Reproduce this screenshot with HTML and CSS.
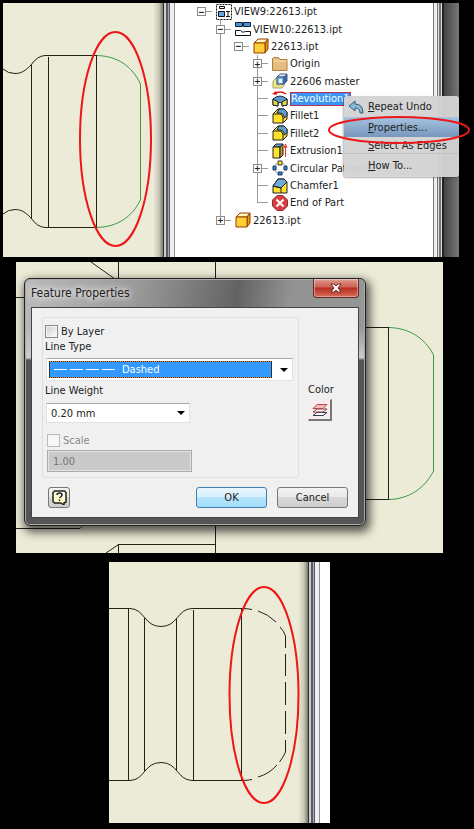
FILE: index.html
```html
<!DOCTYPE html>
<html lang="en">
<head>
    <meta charset="UTF-8">
    <meta name="viewport" content="width=device-width, initial-scale=1.0">
    <title>Feature Properties</title>
    <link rel="stylesheet" href="styles.css">
</head>
<body>
    <main class="steps">
        <!-- Step 1: browser tree and context menu -->
        <section class="panel panel-tree">
            <svg class="sheet" width="160" height="254" viewBox="3 3 160 254">
                <g class="edge">
                    <path d="M3 69Q8 73.500 15 73.500C22 73.500 26 70 31 65Q37 56 45 55.500H97M3 214Q8 209.500 15 209.500C22 209.500 26 213 31 218Q37 227 45 227.500H97"/>
                    <path d="M31.500 65V218M48.500 57V227M96.500 55V228"/>
                </g>
                <path class="edge green" d="M97 55.500C117 56 132 66 140.500 84V200C132 217 117 227 97 227.500"/>
                <ellipse class="mark" cx="115.500" cy="139" rx="35.500" ry="107"/>
            </svg>
            <div class="frame"></div>
            <ul class="tree">
                <li class="row level-0">
                    <span class="node"><button class="expander" aria-label="Collapse">−</button></span>
                    <svg class="icon" viewBox="0 0 16 16"><path d="M.5.500h15v15H.5z" fill="none" stroke="#111" stroke-dasharray="2 1"/><path d="M3.500 2.500h5v2h-5z" fill="#fff" stroke="#111"/><path d="M2.500 7.500h6v5h-6z" fill="#63a9e8" stroke="#111"/><path d="M10 7.500h4M12 7.500v5M10 12.500h4" stroke="#111" fill="none"/></svg>
                    <span>VIEW9:22613.ipt</span>
                </li>
                <li class="row level-1">
                    <span class="node"><button class="expander" aria-label="Collapse">−</button></span>
                    <svg class="icon" viewBox="0 0 16 16"><path d="M.5 1.500h7v4h-7zM8.500 1.500h7v4h-7z" fill="#4b91d4" stroke="#123"/><path d="M.5 9.500h5q2 3 5 1h5v4H.5z" fill="#fff" stroke="#111"/></svg>
                    <span>VIEW10:22613.ipt</span>
                </li>
                <li class="row level-2">
                    <span class="node"><button class="expander" aria-label="Collapse">−</button></span>
                    <svg class="icon" viewBox="0 0 16 16"><path d="M1 5l4-4h10l-3 4z" fill="#fff6c0" stroke="#983f05"/><path d="M12 5l3-4v10l-3 4z" fill="#e39b10" stroke="#983f05"/><path d="M1 5h11v10H1z" fill="#ffcf35" stroke="#983f05"/></svg>
                    <span>22613.ipt</span>
                </li>
                <li class="row level-3">
                    <span class="node"><button class="expander" aria-label="Expand">+</button></span>
                    <svg class="icon" viewBox="0 0 16 16"><path d="M.5 14.500v-12l1-1h5l1.500 2h7v11z" fill="#e5bd81" stroke="#aa7c3d"/><path d="M1.500 5h13" stroke="#f9dfb2"/></svg>
                    <span>Origin</span>
                </li>
                <li class="row level-3">
                    <span class="node"><button class="expander" aria-label="Expand">+</button></span>
                    <svg class="icon" viewBox="0 0 16 16"><path d="M1 8l4-4v8l8-1-3 4H1z" fill="#f0e77a" stroke="#a5a27a"/><path d="M5 4l3-3h7l-3 3z" fill="#d6edfc" stroke="#458"/><path d="M5 4h7v7H5z" fill="#72b5e9" stroke="#458"/><path d="M12 4l3-3v7l-3 3z" fill="#376aa0" stroke="#458"/><path d="M7 6h3v4H7z" fill="#eaf7ff"/></svg>
                    <span>22606 master</span>
                </li>
                <li class="row level-3">
                    <span class="node leaf"></span>
                    <svg class="icon" viewBox="0 0 16 16"><path d="M14 3Q8-1 2 3" fill="none" stroke="#dc1717" stroke-width="1.500"/><path d="M4 0L0 3l5 1z" fill="#dc1717"/><path d="M1 8q7-6 14 0v6l-5 1v-3q-2-1-4 0v3l-5-1z" fill="#5c98cb" stroke="#17283c"/><path d="M1 8l5 3v4l-5-1zM15 8l-5 3v4l5-1z" fill="#ecd931" stroke="#17283c"/></svg>
                    <span class="selected">Revolution1</span>
                </li>
                <li class="row level-3">
                    <span class="node leaf"></span>
                    <svg class="icon" viewBox="0 0 16 16"><path d="M1 6l5-5h6l3 3v7l-4 4H1z" fill="#ffe02c" stroke="#222"/><path d="M5 5l2-4h5l3 3v4l-3 2V8q-1-3-4-3z" fill="#5e9fd5" stroke="#222"/><path d="M1 6h7q3 1 3 4v5" fill="none" stroke="#222"/></svg>
                    <span>Fillet1</span>
                </li>
                <li class="row level-3">
                    <span class="node leaf"></span>
                    <svg class="icon" viewBox="0 0 16 16"><path d="M1 6l5-5h6l3 3v7l-4 4H1z" fill="#ffe02c" stroke="#222"/><path d="M5 5l2-4h5l3 3v4l-3 2V8q-1-3-4-3z" fill="#5e9fd5" stroke="#222"/><path d="M1 6h7q3 1 3 4v5" fill="none" stroke="#222"/></svg>
                    <span>Fillet2</span>
                </li>
                <li class="row level-3">
                    <span class="node leaf"></span>
                    <svg class="icon" viewBox="0 0 16 16"><path d="M1 4l3-3h7L8 4z" fill="#65a7dc" stroke="#222"/><path d="M1 4h7v11H1z" fill="#ffe332" stroke="#222"/><path d="M8 4l3-3v11l-3 3z" fill="#bd9b0c" stroke="#222"/><path d="M13.500 14V3M12 5l1.500-4L15 5" fill="none" stroke="#e23232"/></svg>
                    <span>Extrusion1</span>
                </li>
                <li class="row level-3">
                    <span class="node"><button class="expander" aria-label="Expand">+</button></span>
                    <svg class="icon" viewBox="0 0 16 16"><circle cx="8" cy="8" r="5.500" fill="none" stroke="#777" stroke-dasharray="2 2"/><path d="M6 1h4v4H6z" fill="#ffe52e" stroke="#333"/><path d="M1 6h3v4H1zM12 6h3v4h-3zM6 12h4v3H6z" fill="#387cc5" stroke="#223a66"/></svg>
                    <span>Circular Pattern1</span>
                </li>
                <li class="row level-3">
                    <span class="node leaf"></span>
                    <svg class="icon" viewBox="0 0 16 16"><path d="M1 8l5-7h6l3 3v11H1z" fill="#ffe332" stroke="#222"/><path d="M1 8l5-7h6l3 3-6 6z" fill="#6faadd" stroke="#222"/><path d="M1 8l8 2v5" fill="none" stroke="#222"/></svg>
                    <span>Chamfer1</span>
                </li>
                <li class="row level-3 last">
                    <span class="node leaf"></span>
                    <svg class="icon" viewBox="0 0 16 16"><path d="M5 .5h6L15.500 5v6L11 15.500H5L.5 11V5z" fill="#da3d42" stroke="#8b3438"/><path d="M4.500 4.500l7 7M11.500 4.500l-7 7" stroke="#fff" stroke-width="2"/></svg>
                    <span>End of Part</span>
                </li>
                <li class="row level-1 last">
                    <span class="node"><button class="expander" aria-label="Expand">+</button></span>
                    <svg class="icon" viewBox="0 0 16 16"><path d="M1 5l4-4h10l-3 4z" fill="#fff6c0" stroke="#983f05"/><path d="M12 5l3-4v10l-3 4z" fill="#e39b10" stroke="#983f05"/><path d="M1 5h11v10H1z" fill="#ffcf35" stroke="#983f05"/></svg>
                    <span>22613.ipt</span>
                </li>
            </ul>
            <div class="frame-right"></div>
            <div class="menu" role="menu">
                <button class="menu-item" role="menuitem">
                    <svg class="undo" viewBox="0 0 16 14"><path d="M1 6l6-5v3q8 0 8 9h-3q0-5-5-5v3z" fill="#8fb8d5" stroke="#315e7d"/></svg>
                    <span><u>R</u>epeat Undo</span>
                </button>
                <button class="menu-item active" role="menuitem"><span><u>P</u>roperties...</span></button>
                <button class="menu-item" role="menuitem"><span><u>S</u>elect As Edges</span></button>
                <button class="menu-item separated" role="menuitem"><span><u>H</u>ow To...</span></button>
            </div>
            <svg class="menu-mark" width="144" height="30" viewBox="0 0 144 30"><ellipse class="mark" cx="72" cy="15" rx="70" ry="13"/></svg>
        </section>

        <!-- Step 2: feature properties dialog -->
        <section class="panel panel-dialog">
            <svg class="sheet" viewBox="16 262 427 291">
                <path class="edge" d="M118.500 262v17M91 262l24 17M215.500 262v17M16 297.500h9M16 528.500h64l2-2M215.500 526v27M106 553l12.500-8.500h97M118.500 544v9M365 327.500h24M388.500 327v172M365 499.500h24"/>
                <path class="edge green" d="M389 327.500C409 328 425 338 433.500 355V471C425 488 409 499 389 499.500"/>
            </svg>
            <form class="dialog">
                <header class="titlebar">
                    <h1 class="title">Feature Properties</h1>
                    <button class="close" type="button" aria-label="Close">
                        <svg width="12" height="10" viewBox="0 0 12 10"><path d="M1 1h3l2 2 2-2h3L8 5l3 4H8L6 7 4 9H1l3-4z" fill="#fff" stroke="#6b2c28"/></svg>
                    </button>
                </header>
                <div class="dialog-body">
                    <div class="fields">
                        <div class="group">
                            <label class="check"><input type="checkbox">By Layer</label>
                            <label class="caption" for="line-type">Line Type</label>
                            <select class="line-type" id="line-type"><option>Dashed</option></select>
                            <label class="caption" for="line-weight">Line Weight</label>
                            <select class="line-weight" id="line-weight"><option>0.20 mm</option></select>
                            <label class="check scale"><input type="checkbox" disabled>Scale</label>
                            <input class="scale-value" type="text" value="1.00" aria-label="Scale value" disabled>
                        </div>
                        <div class="color">
                            <label for="color">Color</label>
                            <button class="swatch" id="color" type="button">
                                <svg width="16" height="14" viewBox="0 0 16 14"><path d="M1 12.500l4-3h10l-4 3z" fill="#fff" stroke="#333d48"/><path d="M1 9l4-3h10l-4 3z" fill="#fff" stroke="#8a3d48"/><path d="M1 5.500l4-4h10l-4 4z" fill="#f7b9b6" stroke="#b64a4a"/></svg>
                            </button>
                        </div>
                    </div>
                    <footer class="actions">
                        <button class="button help" type="button" aria-label="Help">
                            <svg width="15" height="15" viewBox="0 0 15 15"><path d="M2.500 1h10l1.500 1.500V12l-2 1v2l-3-2H2.500L1 11.500v-9z" fill="#ffffc5" stroke="#222" stroke-width="1.500"/><path d="M5 5q0-2 2.500-2T10 5q0 1-2.500 3M7.500 9.500V11" fill="none" stroke="#17175b" stroke-width="1.500"/></svg>
                        </button>
                        <button class="button ok" type="submit">OK</button>
                        <button class="button" type="button">Cancel</button>
                    </footer>
                </div>
            </form>
        </section>

        <!-- Step 3: result -->
        <section class="panel panel-result">
            <svg class="sheet" width="199" height="261" viewBox="109 562 199 261">
                <g class="edge">
                    <path d="M109 608.500h21C145 609 144 626.500 161 626.500S177 609 192 608.500h50M109 780.500h21C145 780 144 762.500 161 762.500S177 780 192 780.500h50"/>
                    <path d="M128.500 608v172M144.500 618v153M176.500 618v153M193.500 610v170M241.500 608v172"/>
                    <!-- dashed end -->
                    <path d="M242 608.500q5 0 10 1M258 611q10 3 18 11M280 627q4 4 5.500 9v12M285.500 654v22M285.500 682v23M285.500 711v23M285.500 740v12q-2 5-6 10M277 765q-8 9-19 12M252 779.500q-5 1-10 1"/>
                </g>
                <ellipse class="mark" cx="264" cy="695" rx="34.500" ry="108"/>
            </svg>
            <div class="frame"></div>
            <div class="blank"></div>
        </section>
    </main>
</body>
</html>
```
FILE: styles.css
```css
* {
    box-sizing: border-box;
}

body {
    margin: 0;
    background: #000;
    color: #222;
    font-family: "DejaVu Sans Condensed", "Noto Sans", sans-serif;
    font-size: 11px;
}

button,
input,
select {
    margin: 0;
    font: inherit;
    color: inherit;
}

.steps {
    padding: 3px 0 6px;
}

.panel {
    background: #ecebd7;
}

.sheet {
    display: block;
}

.edge {
    fill: none;
    stroke: #222218;
    stroke-width: 1;
}

.green {
    stroke: #3b9a43;
}

.mark {
    fill: none;
    stroke: #ee1717;
    stroke-width: 2;
}

/* Window edge between the drawing and the browser */
.frame {
    flex: none;
    width: 12px;
    background: linear-gradient(90deg, #333 0 1px, #ccc 1px 3px, #555c68 3px 5px, #aaa 5px 6px, #555c68 6px 7px, #eee 7px 11px, #8c93a0 11px);
}

.panel-tree .sheet,
.panel-result .sheet {
    flex: none;
    background: linear-gradient(90deg, transparent calc(100% - 10px), #c8c7b6 calc(100% - 4px), #77776c);
}

/* Browser tree */
.panel-tree {
    position: relative;
    display: flex;
    margin: 0 15px 0 3px;
}

.tree {
    flex: 1;
    display: grid;
    grid-auto-rows: 1fr;
    height: 226px;
    margin: 0;
    padding: 0;
    list-style: none;
    white-space: nowrap;
}

.panel-tree,
.blank {
    background-color: #fff;
}

.panel-tree .sheet {
    background-color: #ecebd7;
}

.row {
    display: flex;
    align-items: center;
    background-repeat: no-repeat;
}

.level-0 {
    padding-left: 22px;
}

.level-1 {
    padding-left: 41px;
}

.level-2 {
    padding-left: 59px;
}

.level-3 {
    padding-left: 78px;
}

.level-1,
.level-2 {
    background-image: linear-gradient(#999, #999);
    background-position: 45px 0;
    background-size: 1px 100%;
}

.level-3 {
    background-image: linear-gradient(#999, #999), linear-gradient(#999, #999);
    background-position: 45px 0, 82px 0;
    background-size: 1px 100%, 1px 100%;
}

.level-3.last {
    background-size: 1px 100%, 1px 50%;
}

.level-1.last {
    background-size: 1px 50%;
}

.node {
    flex: none;
    display: flex;
    width: 19px;
    background: linear-gradient(#999, #999) 4px 50% / 11px 1px no-repeat;
}

.leaf {
    height: 9px;
}

.expander {
    width: 9px;
    height: 9px;
    padding: 0;
    border: 1px solid #8b8b8b;
    background: #fff;
    font-size: 9px;
    font-weight: bold;
    line-height: 6px;
}

.icon {
    flex: none;
    width: 16px;
    height: 16px;
    margin-right: 2px;
}

.selected {
    border: 1px solid #b92d52;
    background: #3996f5;
    color: #fff;
    line-height: 12px;
}

.frame-right {
    width: 26px;
    background: linear-gradient(90deg, #777 0 1px, #eee 1px 4px, #777 4px 5px, #ddd 5px 6px, #777 6px 8px, #ddd 8px 9px, #222 9px 11px, #444 11px, #777);
}

/* Context menu */
.menu {
    position: absolute;
    top: 93px;
    right: 0;
    width: 115px;
    border-radius: 3px;
    background: rgba(211, 211, 211, 0.96);
    box-shadow: -1px 1px 2px rgba(0, 0, 0, 0.3);
}

.menu-item {
    display: flex;
    align-items: center;
    justify-content: flex-end;
    width: 100%;
    height: 16px;
    padding: 0;
    border: 0;
    background: none;
    text-align: left;
    white-space: nowrap;
}

.menu-item span {
    width: 91px;
}

.menu-item:first-child {
    height: 21px;
}

.menu-item.active {
    height: 20px;
    background: linear-gradient(#a6c3df, #7897bd);
}

.menu-item.separated {
    height: 24px;
    border-top: 1px solid #c2c2c2;
}

.undo {
    width: 16px;
    height: 14px;
    margin-right: 4px;
}

.menu-mark {
    position: absolute;
    top: 112px;
    right: -12px;
}

/* Dialog */
.panel-dialog {
    display: grid;
    margin: 5px 31px 0 16px;
}

.panel-dialog .sheet,
.dialog {
    grid-area: 1 / 1;
}

.panel-dialog .sheet {
    width: 100%;
}

.dialog {
    display: flex;
    flex-direction: column;
    margin: 16px 77px 27px 8px;
    padding: 0 6px 7px;
    border: 1px solid #222;
    border-radius: 6px;
    background: linear-gradient(transparent 20%, #ccc 32%, #555 33%, #555), linear-gradient(100deg, #bbb, #999 30%, #636363 56%, #929292 70%, #999);
    box-shadow: inset 0 0 0 1px #aaa, 2px 4px 10px 2px rgba(0, 0, 0, 0.65);
}

.titlebar {
    display: flex;
    justify-content: space-between;
    height: 28px;
}

.title {
    margin: 0;
    font-size: 12px;
    font-weight: normal;
    line-height: 28px;
    text-shadow: 0 0 6px #fff, 0 0 10px #fff;
}

.close {
    display: grid;
    place-items: center;
    width: 46px;
    height: 19px;
    padding: 0;
    border: 1px solid #602a27;
    border-top: 0;
    border-radius: 0 0 4px 4px;
    background: linear-gradient(#dc9c91, #cd5e4e 45%, #b72e1f 50%, #d5695a);
    box-shadow: inset 0 0 1px 1px rgba(255, 255, 255, 0.4);
}

.dialog-body {
    flex: 1;
    display: flex;
    flex-direction: column;
    gap: 9px;
    padding: 9px 10px 0;
    border: 1px solid #444;
    background: #f0f0f0;
}

.fields {
    display: flex;
    gap: 9px;
}

.group {
    flex: 1;
    display: flex;
    flex-direction: column;
    align-items: flex-start;
    height: 161px;
    padding: 6px 6px 0 2px;
    border: 1px solid #dfdfdf;
    border-radius: 2px;
}

.check {
    display: flex;
    align-items: center;
    gap: 3px;
    height: 14px;
}

.check input {
    appearance: none;
    width: 13px;
    height: 13px;
    border: 1px solid #888;
    background: linear-gradient(135deg, #ccc, #fff);
    box-shadow: inset 0 0 0 1px #f4f4f4;
}

.caption {
    line-height: 18px;
}

.line-type,
.line-weight {
    appearance: none;
    border: 1px solid #e2e2e2;
    border-top-color: #aaa;
    border-radius: 0;
    background: #fff url("data:image/svg+xml,%3Csvg xmlns='http://www.w3.org/2000/svg' width='8' height='4'%3E%3Cpath d='M0 0h8L4 4z'/%3E%3C/svg%3E") right 4px center no-repeat;
}

.line-type {
    width: 100%;
    height: 23px;
    margin: 2px 0 0 1px;
    padding: 0 20px 0 75px;
    background-image:
        url("data:image/svg+xml,%3Csvg xmlns='http://www.w3.org/2000/svg' width='8' height='4'%3E%3Cpath d='M0 0h8L4 4z'/%3E%3C/svg%3E"),
        repeating-linear-gradient(90deg, #fff 0 13px, transparent 13px 16px),
        linear-gradient(#3399ff, #3399ff),
        repeating-linear-gradient(90deg, #333 0 1px, #d98c40 1px 2px);
    background-position: right 4px center, 7px center, 3px 3px, 2px 2px;
    background-size: 8px 4px, 61px 1px, calc(100% - 24px) 15px, calc(100% - 22px) 17px;
    color: #fff;
}

.line-type option {
    color: #222;
}

.line-type + .caption {
    margin-top: 1px;
}

.line-weight {
    width: 144px;
    height: 20px;
    margin: 3px 0 0 1px;
    padding: 0 16px 0 4px;
}

.scale {
    margin: 10px 0 0 2px;
    color: #888;
}

.scale input {
    border-color: #bbb;
    background: #f8f8f8;
}

.scale-value {
    width: 145px;
    height: 22px;
    margin: 3px 0 0 2px;
    padding: 0 5px;
    border: 1px solid #aaa;
    background: #c9c9c9;
    box-shadow: inset 0 0 0 1px #e2e2e2;
    color: #777;
}

.color {
    display: flex;
    flex-direction: column;
    gap: 3px;
    width: 40px;
    padding-top: 66px;
}

.swatch {
    display: grid;
    place-items: center;
    width: 24px;
    height: 22px;
    padding: 0;
    border: 1px solid #eee;
    border-right: 2px solid #777;
    border-bottom: 2px solid #777;
    background: #f6eeee;
}

.actions {
    display: flex;
    gap: 10px;
    padding-left: 6px;
}

.button {
    width: 71px;
    height: 21px;
    padding: 0;
    border: 1px solid #777;
    border-radius: 3px;
    background: linear-gradient(#f3f3f3, #e8e8e8 50%, #d8d8d8 50%, #cecece);
}

.help {
    display: grid;
    place-items: center;
    width: 22px;
    margin-right: auto;
}

.ok {
    border-color: #3c7fb1;
    background: linear-gradient(#e9f6fd, #d4effc 50%, #b6e5fb 50%, #a2dcfa);
}

/* Result drawing */
.panel-result {
    display: flex;
    width: fit-content;
    margin: 9px 0 0 23%;
}

.blank {
    width: 10px;
}
```
